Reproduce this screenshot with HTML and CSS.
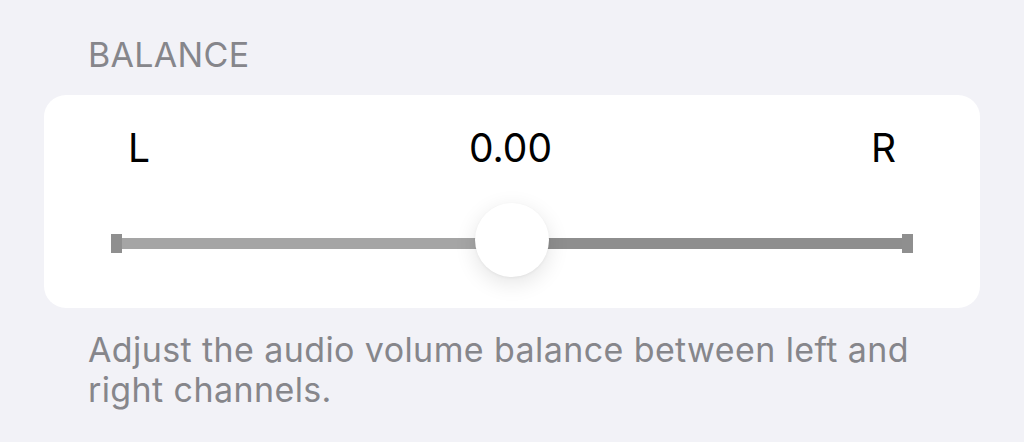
FILE: index.html
```html
<!DOCTYPE html>
<html lang="en">
<head>
<meta charset="utf-8">
<title>Balance</title>
<link rel="stylesheet" href="styles.css">
</head>
<body>
  <section class="group">
    <h2 class="group-title">BALANCE</h2>
    <div class="card">
      <div class="labels">
        <span class="label">L</span>
        <span class="label value">0.00</span>
        <span class="label">R</span>
      </div>
      <div class="slider">
        <div class="track">
          <span class="cap"></span>
          <span class="fill fill-left"></span>
          <span class="fill fill-right"></span>
          <span class="cap"></span>
        </div>
        <span class="thumb"></span>
      </div>
    </div>
    <p class="footer">Adjust the audio volume balance between left and right channels.</p>
  </section>
</body>
</html>
```
FILE: styles.css
```css
html, body {
  margin: 0;
  padding: 0;
}

body {
  background: #f2f2f7;
  font-family: Inter, "Noto Sans", "Liberation Sans", sans-serif;
  width: 1024px;
  height: 442px;
  overflow: hidden;
}

.group {
  display: flex;
  flex-direction: column;
  padding: 35px 44px 0 44px;
}

.group-title {
  margin: 0 0 20px 44px;
  font-size: 34px;
  line-height: 40px;
  font-weight: 400;
  letter-spacing: 0.3px;
  color: #86868b;
}

.card {
  background: #ffffff;
  border-radius: 22px;
  padding: 29px 67px 31px 67px;
  display: flex;
  flex-direction: column;
  gap: 31px;
}

.labels {
  display: flex;
  justify-content: space-between;
  align-items: center;
  padding: 0 17px;
}

.label {
  font-size: 39px;
  line-height: 48px;
  color: #000000;
}

.slider {
  position: relative;
  height: 74px;
  display: flex;
  align-items: center;
}

.track {
  flex: 1;
  display: flex;
  align-items: center;
  margin-top: 7px;
}

.cap {
  width: 11px;
  height: 19px;
  background: #8f8f8f;
}

.fill {
  flex: 1;
  height: 11px;
}

.fill-left {
  background: #a5a5a5;
}

.fill-right {
  background: #8e8e8e;
}

.thumb {
  position: absolute;
  left: 50%;
  top: 0;
  width: 74px;
  height: 74px;
  margin-left: -37px;
  border-radius: 50%;
  background: #ffffff;
  box-shadow: 0 6px 22px rgba(0, 0, 0, 0.11), 0 1px 3px rgba(0, 0, 0, 0.05);
}

.footer {
  margin: 22px 0 0 44px;
  font-size: 34px;
  line-height: 40px;
  letter-spacing: 0.4px;
  color: #86868b;
  max-width: 860px;
}
```
